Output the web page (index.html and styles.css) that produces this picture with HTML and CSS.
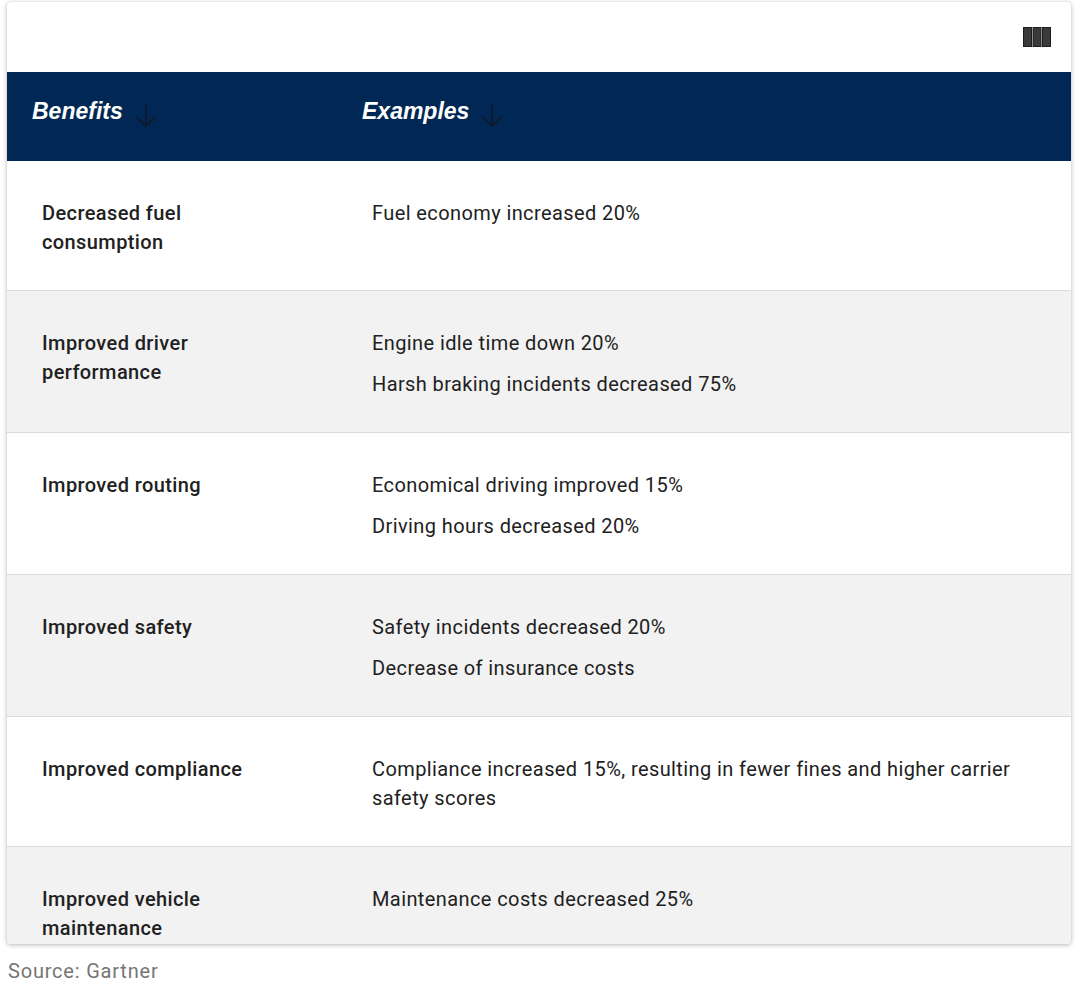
FILE: index.html
```html
<!DOCTYPE html>
<html lang="en">
<head>
<meta charset="utf-8">
<title>Benefits table</title>
<link rel="stylesheet" href="styles.css">
</head>
<body>
<div class="card">
  <div class="toolbar">
    <svg class="col-icon" width="28" height="20" viewBox="0 0 28 20" aria-hidden="true">
      <rect x="0.5" y="0.5" width="8" height="19" fill="#3a3a3a" stroke="#1c1c1c"/>
      <rect x="10" y="0.5" width="8" height="19" fill="#3a3a3a" stroke="#1c1c1c"/>
      <rect x="19.5" y="0.5" width="8" height="19" fill="#3a3a3a" stroke="#1c1c1c"/>
    </svg>
  </div>
  <div class="table-wrap">
    <table class="tbl">
      <colgroup><col class="c1"><col class="c2"></colgroup>
      <thead>
        <tr>
          <th><div class="hcell"><span>Benefits</span><svg class="arrow" width="24" height="24" viewBox="0 0 24 24"><path d="M12 1v21M2.5 12.5L12 22l9.5-9.5" fill="none" stroke="#0c1a2e" stroke-width="2"/></svg></div></th>
          <th><div class="hcell"><span>Examples</span><svg class="arrow" width="24" height="24" viewBox="0 0 24 24"><path d="M12 1v21M2.5 12.5L12 22l9.5-9.5" fill="none" stroke="#0c1a2e" stroke-width="2"/></svg></div></th>
        </tr>
      </thead>
      <tbody>
        <tr>
          <td class="b"><p>Decreased fuel consumption</p></td>
          <td><p>Fuel economy increased 20%</p></td>
        </tr>
        <tr class="alt">
          <td class="b"><p>Improved driver performance</p></td>
          <td><p>Engine idle time down 20%</p><p>Harsh braking incidents decreased 75%</p></td>
        </tr>
        <tr>
          <td class="b"><p>Improved routing</p></td>
          <td><p>Economical driving improved 15%</p><p>Driving hours decreased 20%</p></td>
        </tr>
        <tr class="alt">
          <td class="b"><p>Improved safety</p></td>
          <td><p>Safety incidents decreased 20%</p><p>Decrease of insurance costs</p></td>
        </tr>
        <tr>
          <td class="b"><p>Improved compliance</p></td>
          <td><p>Compliance increased 15%, resulting in fewer fines and higher carrier safety scores</p></td>
        </tr>
        <tr class="alt">
          <td class="b"><p>Improved vehicle maintenance</p></td>
          <td><p>Maintenance costs decreased 25%</p></td>
        </tr>
      </tbody>
    </table>
  </div>
</div>
<p class="source">Source: Gartner</p>
</body>
</html>
```

FILE: styles.css
```css
* { box-sizing: border-box; }
html, body { margin: 0; background: #fff; }
body {
  padding: 2px 9px 0 7px;
  font-family: Roboto, "Noto Sans", Arial, sans-serif;
  color: #212121;
}
.card {
  background: #fff;
  border-radius: 4px;
  box-shadow: 0 1px 5px rgba(0,0,0,0.28), 0 0 1px rgba(0,0,0,0.12);
  overflow: hidden;
}
.toolbar {
  height: 70px;
  display: flex;
  align-items: center;
  justify-content: flex-end;
  padding-right: 20px;
}
.col-icon { display: block; }
.table-wrap {
  height: 872px;
  overflow: hidden;
}
.tbl {
  width: 100%;
  border-collapse: collapse;
  table-layout: fixed;
}
.c1 { width: 330px; }
.tbl thead tr { background: #012854; height: 89px; }
.tbl th {
  text-align: left;
  vertical-align: top;
  padding: 26px 25px 0;
  font-family: "Liberation Sans", Arial, sans-serif;
  font-style: italic;
  font-weight: 700;
  font-size: 23px;
  color: #fff;
}
.hcell { display: flex; align-items: flex-start; }
.hcell span { line-height: 26px; }
.arrow { display: block; margin: 6px 0 0 11px; }
.tbl td {
  vertical-align: top;
  padding: 38px 35px 21px;
  font-size: 20px;
  letter-spacing: 0.02em;
  line-height: 29px;
  border-top: 1px solid #dcdcdc;
}
.tbl tbody tr:first-child td { border-top: 0; }
.tbl td.b { font-weight: 500; }
.tbl td p { margin: 0 0 12px; }
.tbl tr.alt { background: #f2f2f2; }
.source {
  margin: 15px 0 0 1px;
  font-size: 20px;
  letter-spacing: 0.04em;
  color: #757575;
}
```
